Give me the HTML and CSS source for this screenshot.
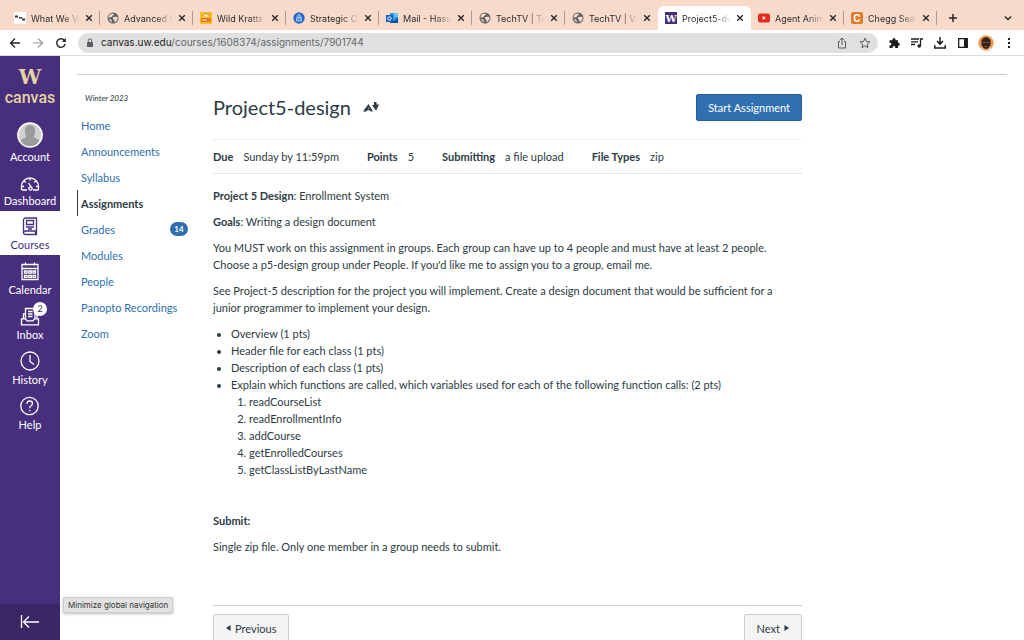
FILE: index.html
```html
<!DOCTYPE html>
<html lang="en">
<head>
<meta charset="utf-8">
<title>Project5-design</title>
<link rel="stylesheet" href="styles.css">
</head>
<body>
<svg class="defs" width="0" height="0" aria-hidden="true">
  <symbol id="globe" viewBox="0 0 12 12"><circle cx="6" cy="6" r="5.5" fill="#5f6368"/><path d="M2 3.2 4 1.700h3L6.400 3.200 5 4l-.5 1.300H2.800L1.400 6zM5.800 5.600l2-.8 2.700.3v1.800L9 9.600 7.600 10.300 7.400 8 6 7zM1.600 7l2.300.6L5 9l-.7 1.400z" fill="#f8dacb"/></symbol>
  <symbol id="close" viewBox="0 0 8 8"><path d="M1.200 1.200l5.600 5.600M6.800 1.200 1.200 6.800" stroke="#222" stroke-width="1.300" fill="none"/></symbol>
</svg>

<header class="browser">
  <nav class="tabs" aria-label="Browser tabs">
    <div class="tab"><svg class="favicon" viewBox="0 0 12 12"><path fill="#fff" d="M0 0h12v12H0z"/><path d="M1 3.500h3v2H1zM5 5h3v1.500H5zM8 6.500h3v2H8z" fill="#333"/></svg><span class="tab-name">What We Va</span><button class="close" aria-label="Close tab"><svg><use href="#close"/></svg></button></div>
    <div class="tab"><svg class="favicon"><use href="#globe"/></svg><span class="tab-name">Advanced C</span><button class="close" aria-label="Close tab"><svg><use href="#close"/></svg></button></div>
    <div class="tab"><svg class="favicon" viewBox="0 0 12 12"><path fill="#f4bd27" d="M0 0h12v12H0z"/><path fill="#e87a20" d="M1 6h10v4H1z"/><path d="M3 4l2-3 2 2 2-1v3M2 7h5v2H3" fill="#fff0c4" stroke="#c95b16" stroke-width=".6"/></svg><span class="tab-name">Wild Kratts S</span><button class="close" aria-label="Close tab"><svg><use href="#close"/></svg></button></div>
    <div class="tab"><svg class="favicon" viewBox="0 0 12 12"><circle cx="6" cy="6" r="5.700" fill="#2a66c8"/><path d="M3.500 5.500h5V9h-5zM4.500 5V4a1.500 1.500 0 013 0v1" fill="#5f9bea" stroke="#b9d5ff" stroke-width=".7"/></svg><span class="tab-name">Strategic Ca</span><button class="close" aria-label="Close tab"><svg><use href="#close"/></svg></button></div>
    <div class="tab"><svg class="favicon" viewBox="0 0 12 12"><path fill="#2a9be8" d="M4 1h8v10H4z"/><path fill="#66c4f4" d="M8 1h4v4H8z"/><path fill="#1550a0" d="M4 6l4 3 4-3v5H4z"/><path fill="#0f65bd" d="M0 3h7v7H0z"/><circle cx="3.500" cy="6.500" r="1.700" fill="none" stroke="#fff"/></svg><span class="tab-name">Mail - Hassa</span><button class="close" aria-label="Close tab"><svg><use href="#close"/></svg></button></div>
    <div class="tab"><svg class="favicon"><use href="#globe"/></svg><span class="tab-name">TechTV | Tec</span><button class="close" aria-label="Close tab"><svg><use href="#close"/></svg></button></div>
    <div class="tab before-active"><svg class="favicon"><use href="#globe"/></svg><span class="tab-name">TechTV | Vat</span><button class="close" aria-label="Close tab"><svg><use href="#close"/></svg></button></div>
    <div class="tab active"><span class="favicon uw-icon">W</span><span class="tab-name">Project5-de</span><button class="close" aria-label="Close tab"><svg><use href="#close"/></svg></button></div>
    <div class="tab"><svg class="favicon" viewBox="0 0 12 12"><rect y="1.500" width="12" height="9" rx="2" fill="#e8291e"/><path d="M4.700 4v4L8 6z" fill="#fff"/></svg><span class="tab-name">Agent Anima</span><button class="close" aria-label="Close tab"><svg><use href="#close"/></svg></button></div>
    <div class="tab"><span class="favicon chegg-icon">C</span><span class="tab-name">Chegg Sear</span><button class="close" aria-label="Close tab"><svg><use href="#close"/></svg></button></div>
    <button class="new-tab" aria-label="New tab"><svg width="10" height="10" viewBox="0 0 10 10"><path d="M5 1v8M1 5h8" stroke="#222" stroke-width="1.500"/></svg></button>
    <button class="tab-menu" aria-label="Search tabs"><svg width="8" height="8" viewBox="0 0 8 8"><path d="M1 2.500l3 3 3-3" fill="none" stroke="#222" stroke-width="1.300"/></svg></button>
  </nav>
  <div class="toolbar">
    <button aria-label="Back"><svg width="12" height="12" viewBox="0 0 12 12"><path d="M11 6H2M6 1.500 1.500 6 6 10.500" fill="none" stroke="#222" stroke-width="1.300"/></svg></button>
    <button aria-label="Forward"><svg width="12" height="12" viewBox="0 0 12 12"><path d="M1 6h9M6 1.500l4.500 4.500L6 10.500" fill="none" stroke="#999" stroke-width="1.200"/></svg></button>
    <button aria-label="Reload"><svg width="12" height="12" viewBox="0 0 12 12"><path d="M9.700 3.800A4.300 4.300 0 1010.200 7" fill="none" stroke="#222" stroke-width="1.400"/><path d="M10.800 1v4H6.800z" fill="#222"/></svg></button>
    <div class="address">
      <svg width="8" height="10" viewBox="0 0 8 10"><path d="M1.500 4.500h5V8.500h-5z" fill="#5a5d61" stroke="#5a5d61"/><path d="M2.300 4V2.500a1.700 1.700 0 013.400 0V4" fill="none" stroke="#5a5d61"/></svg>
      <span class="url"><b>canvas.uw.edu</b>/courses/1608374/assignments/7901744</span>
      <button aria-label="Share"><svg width="12" height="12" viewBox="0 0 12 12"><path d="M4 4.500H2.500V11h7V4.500H8M6 8V1M3.800 3 6 1l2.200 2" fill="none" stroke="#55585c"/></svg></button>
      <button aria-label="Bookmark"><svg width="12" height="12" viewBox="0 0 12 12"><path d="M6 1.200l1.400 3.200 3.500.4-2.600 2.300.7 3.500L6 8.800l-3 1.800.7-3.500L1.100 4.800l3.500-.4z" fill="none" stroke="#55585c"/></svg></button>
    </div>
    <div class="tools">
      <button aria-label="Extensions"><svg width="12" height="12" viewBox="0 0 12 12"><path d="M1.500 3.300h3v-.8a1.500 1.500 0 013 0v.8H10v2.500h.3a1.500 1.500 0 010 3H10V11H7.300v-.5a1.400 1.400 0 00-2.800 0v.5h-3V8.500H2a1.400 1.400 0 000-2.800h-.5z" fill="#1d1e20"/></svg></button>
      <button aria-label="Media"><svg width="12" height="12" viewBox="0 0 12 12"><path d="M0 2h8M0 4.800h7M0 7.500h4M9.500 9V2H12" fill="none" stroke="#1d1e20" stroke-width="1.300"/><circle cx="8.200" cy="9" r="1.800" fill="#1d1e20"/></svg></button>
      <button aria-label="Downloads"><svg width="12" height="12" viewBox="0 0 12 12"><path d="M6 0v7M3 4l3 3.200L9 4M.7 8v3h10.600V8" fill="none" stroke="#1d1e20" stroke-width="1.500"/></svg></button>
      <button aria-label="Side panel"><svg width="12" height="12" viewBox="0 0 12 12"><path d="M1.700 1.700h8.600v8.600H1.700z" fill="none" stroke="#1d1e20" stroke-width="1.300"/><path d="M7 1.500h3.500v9H7z" fill="#1d1e20"/></svg></button>
      <button aria-label="Profile"><svg width="16" height="16" viewBox="0 0 16 16"><circle cx="8" cy="8" r="7.700" fill="#e79b54"/><path d="M3.500 5Q8-1 12.500 5v5Q8 18 3.500 10z" fill="#35201c"/><path d="M5 7.500h2.500M8.700 7.500H11M6.500 11.500h3" stroke="#8e6251"/><path d="M2.500 13l2.500 2M13.500 13 11 15" stroke="#ddd" stroke-width="2"/></svg></button>
      <button aria-label="Menu"><svg width="12" height="12" viewBox="0 0 12 12"><path d="M5 1h2v2H5zM5 5h2v2H5zM5 9h2v2H5z" fill="#1d1e20"/></svg></button>
    </div>
  </div>
</header>

<div class="app">
  <nav class="global-nav" aria-label="Global navigation">
    <a class="logo" href="#"><span class="logo-w">W</span><span>canvas</span></a>
    <a class="nav-item account" href="#"><svg width="26" height="26" viewBox="0 0 26 26"><circle cx="13" cy="13" r="12" fill="#d0d0d0"/><path d="M3 20q1-3 6-4.500L8 10q-.5-7 5-7t5 7l-1 5.500q5 1.500 6 4.500-4 5-10 5T3 20z" fill="#9b9b9b"/><circle cx="13" cy="13" r="12" fill="none" stroke="#fff" stroke-width="1.700"/></svg>Account</a>
    <a class="nav-item dashboard" href="#"><svg width="20" height="16" viewBox="0 2 20 16"><path d="M7 16H2.500a1 1 0 01-1-1v-2.500a8.500 8.500 0 0117 0V15a1 1 0 01-1 1H13M10 4v2.500M4 7l1.800 1.500M16 7l-1.800 1.500M1.500 12.500H4M18.500 12.500H16M8.500 9l3 4.500" /><circle cx="10.500" cy="14.500" r="1.700"/></svg>Dashboard</a>
    <a class="nav-item current" href="#"><svg width="20" height="20" viewBox="0 0 20 20"><path d="M16.500 14.500V2H5.500a2 2 0 00-2 2v12.500a2 2 0 002 2h11V15H5.500a2 2 0 00-2 1.500M6.500 4.500h7v4h-7zM6 11h8M8 13h4M15.500 15v3.500"/></svg>Courses</a>
    <a class="nav-item" href="#"><svg width="20" height="20" viewBox="0 0 20 20"><path d="M2 3.500h16v15H2zM2 7.500h16M5.500 1.500v3M14.500 1.500v3M4.500 10h2.500v2.200H4.500zM8.800 10h2.500v2.200H8.800zM13 10h2.500v2.200H13zM4.500 14.300h2.500v2H4.500zM8.800 14.300h2.500v2H8.800zM13 14.300h2.500v2H13z"/></svg>Calendar</a>
    <a class="nav-item inbox" href="#"><svg width="20" height="20" viewBox="0 0 20 20"><path d="M5 8H3.500v5M15 8h2v5M5.500 13V2.500H15V13M8 5.500h4.500M8 8h4.500M8 10.500h4.500M1.500 12.800h4l1.500 2h6l1.500-2h4v6h-17z"/></svg><span class="badge">2</span>Inbox</a>
    <a class="nav-item" href="#"><svg width="20" height="20" viewBox="0 0 20 20"><circle cx="10" cy="10" r="9"/><path d="M10 4v6.500l4 3"/></svg>History</a>
    <a class="nav-item" href="#"><svg width="20" height="20" viewBox="0 0 20 20"><circle cx="9.500" cy="10" r="8.700"/><path d="M7 8q0-3 2.700-3 2.800 0 2.800 2.500 0 1.500-1.500 2.300-1.300.8-1.300 2.400M9.700 14v1.300"/></svg>Help</a>
    <button class="minimize" aria-label="Minimize global navigation"><svg width="20" height="14" viewBox="0 0 20 14"><path d="M1.500 0v13M19 7H4M9 1.500 3.500 7 9 12.500" fill="none" stroke="#fff" stroke-width="1.300"/></svg></button>
    <span class="tooltip" role="tooltip">Minimize global navigation</span>
  </nav>

  <div class="page">
    <nav class="course-nav" aria-label="Course navigation">
      <span class="term">Winter 2023</span>
      <a href="#">Home</a>
      <a href="#">Announcements</a>
      <a href="#">Syllabus</a>
      <a class="selected" href="#">Assignments</a>
      <a href="#">Grades<span class="count">14</span></a>
      <a href="#">Modules</a>
      <a href="#">People</a>
      <a href="#">Panopto Recordings</a>
      <a href="#">Zoom</a>
    </nav>
    <main class="assignment">
      <div class="heading">
        <h1>Project5-design</h1>
        <svg width="16" height="12" viewBox="0 0 16 12"><path d="M0 10.500 5.500 3l4 6.500v1H7.600L7 9.200H4.300l-1 1.300zM5 7.800h1.500L5.700 6.400z" fill="#2d3b45" fill-rule="evenodd"/><path d="M11 1h2.500v2.500H16L13.500 9h-1L9 4h2z" fill="#2d3b45"/></svg>
        <button class="start">Start Assignment</button>
      </div>
      <dl class="details">
        <div><dt>Due</dt><dd>Sunday by 11:59pm</dd></div>
        <div><dt>Points</dt><dd>5</dd></div>
        <div><dt>Submitting</dt><dd>a file upload</dd></div>
        <div><dt>File Types</dt><dd>zip</dd></div>
      </dl>
      <div class="description">
        <p><b>Project 5 Design</b>: Enrollment System</p>
        <p><b>Goals</b>: Writing a design document</p>
        <p>You MUST work on this assignment in groups. Each group can have up to 4 people and must have at least 2 people.<br>Choose a p5-design group under People. If you'd like me to assign you to a group, email me.</p>
        <p>See Project-5 description for the project you will implement. Create a design document that would be sufficient for a<br>junior programmer to implement your design.</p>
        <ul>
          <li>Overview (1 pts)</li>
          <li>Header file for each class (1 pts)</li>
          <li>Description of each class (1 pts)</li>
          <li>Explain which functions are called, which variables used for each of the following function calls: (2 pts)
            <ol><li>readCourseList</li><li>readEnrollmentInfo</li><li>addCourse</li><li>getEnrolledCourses</li><li>getClassListByLastName</li></ol>
          </li>
        </ul>
        <p class="submit"><b>Submit:</b></p>
        <p>Single zip file. Only one member in a group needs to submit.</p>
      </div>
      <div class="pager">
        <a href="#"><svg width="5" height="6" viewBox="0 0 5 6"><path d="M4.500 0v6L0 3z"/></svg>Previous</a>
        <a href="#">Next<svg width="5" height="6" viewBox="0 0 5 6"><path d="M.5 0v6L5 3z"/></svg></a>
      </div>
    </main>
  </div>
</div>
</body>
</html>
```
FILE: styles.css
```css
* { box-sizing: border-box; }
body {
  margin: 0;
  height: 100vh;
  display: flex;
  flex-direction: column;
  overflow: hidden;
  background: #fff;
  color: #2d3b45;
  font: 11px/17px Lato, "Liberation Sans", sans-serif;
}
a { text-decoration: none; color: #2e6fb0; }
button { border: 0; padding: 0; background: none; font: inherit; display: flex; align-items: center; justify-content: center; }
svg { flex: none; display: block; }
.defs { position: absolute; }

/* Browser chrome */
.browser { font-family: Inter, "Liberation Sans", sans-serif; flex: none; }
.tabs { display: flex; height: 30px; padding: 6px 12px 0 7px; background: #f8dacb; }
.tab { display: flex; align-items: center; flex: 0 1 93px; min-width: 0; padding: 0 7px 0 7px; gap: 5px; position: relative; color: #2b2b2b; font-size: 9px; }
.tab::after { content: ""; position: absolute; right: 0; top: 5px; height: 14px; width: 1px; background: #a89b95; }
.tab.before-active::after, .tab.active::after { display: none; }
.tab.active { background: #fff; border-radius: 6px 6px 0 0; }
.favicon { width: 12px; height: 12px; flex: none; }
.tab-name { flex: 1; min-width: 0; white-space: nowrap; -webkit-mask-image: linear-gradient(90deg, #000 65%, transparent); mask-image: linear-gradient(90deg, #000 65%, transparent); }
.close svg { width: 8px; height: 8px; }
.uw-icon { background: #46307c; color: #fff; font: bold 10px/14px "DejaVu Serif", serif; text-align: center; overflow: hidden; }
.chegg-icon { background: #e07b2c; color: #fff; border-radius: 2px; font: bold 10px/12px Inter, sans-serif; text-align: center; }
.new-tab { width: 32px; }
.tab-menu { margin-left: auto; }
.toolbar { display: flex; align-items: center; height: 26px; padding: 0 4px 0 9px; gap: 11px; border-bottom: 1px solid #dcdcdc; }
.address { flex: 1; display: flex; align-items: center; height: 20px; border-radius: 10px; background: #e0e0e0; padding: 0 7px 0 8px; gap: 11px; color: #66696d; font-size: 10px; }
.url { flex: 1; margin-left: -4px; white-space: nowrap; overflow: hidden; }
.url b { font-weight: 400; color: #222; }
.tools { display: flex; align-items: center; margin-left: -7px; }
.tools button { width: 23px; }

/* Global navigation */
.app { flex: 1; min-height: 0; display: flex; }
.global-nav { position: relative; flex: 0 0 60px; display: flex; flex-direction: column; background: #482f7d; }
.logo { display: flex; flex-direction: column; align-items: center; padding-top: 9px; height: 60px; color: #e6d3a2; font: 500 16px/18px Roboto, sans-serif; }
.logo-w { font: bold 20px/24px "DejaVu Serif", serif; }
.nav-item { display: flex; flex-direction: column; align-items: center; justify-content: flex-end; gap: 2px; height: 45px; padding-bottom: 4px; color: #fff; line-height: 13px; position: relative; }
.nav-item svg { fill: none; stroke: currentColor; stroke-width: 1.300; }
.account { height: 51px; }
.account svg { stroke: none; }
.dashboard, .current { height: 44px; }
.current { background: #fff; color: #46307c; }
.badge { position: absolute; left: 33px; top: 2px; width: 14px; height: 14px; border-radius: 7px; background: #fff; color: #2d3b45; font-size: 9px; line-height: 14px; text-align: center; }
.minimize { margin-top: auto; height: 36px; background: #3a2664; }
.tooltip { position: absolute; left: 63px; bottom: 27px; padding: 0 4px; border: 1px solid #cfcfcf; border-radius: 2px; background: #e2e2e2; color: #333; box-shadow: 0 1px 3px #0004; font: 8px/14px Inter, sans-serif; white-space: nowrap; }

/* Course page */
.page { flex: 1; min-width: 0; display: flex; align-items: flex-start; gap: 25px; margin: 18px 17px 0; border-top: 1px solid #c7cdd1; }
.course-nav { flex: 0 0 111px; display: flex; flex-direction: column; padding-top: 16px; }
.term { padding-left: 8px; margin-bottom: 6px; font-size: 8px; line-height: 15px; font-style: italic; }
.course-nav a { display: flex; justify-content: space-between; align-items: center; height: 26px; padding-left: 4px; white-space: nowrap; }
.course-nav .selected { border-left: 1px solid #2d3b45; padding-left: 3px; color: #2d3b45; font-weight: 700; }
.count { width: 18px; height: 14px; border-radius: 7px; background: #2e6fb0; color: #fff; font-size: 8px; line-height: 14px; text-align: center; font-weight: 700; }
.assignment { flex: 0 1 589px; min-width: 0; }
.heading { display: flex; align-items: center; height: 64px; gap: 12px; }
h1 { margin: 0; font-size: 20px; line-height: 24px; font-weight: 400; }
.start { margin-left: auto; height: 27px; padding: 0 11px; border: 1px solid #275f97; border-radius: 2px; background: #2f70b1; color: #fff; }
.details { display: flex; align-items: center; gap: 28px; margin: 0 0 13px; height: 35px; border-top: 1px solid #eee; border-bottom: 1px solid #e3e5e7; }
.details div { display: flex; gap: 10px; }
.details dt { font-weight: 700; }
.details dd { margin: 0; }
.description p { margin: 0 0 9px; }
.description ul, .description ol { margin: 0; padding-left: 18px; }
.description .submit { margin-top: 34px; }
.pager { display: flex; justify-content: space-between; margin-top: 50px; padding-top: 8px; border-top: 1px solid #c7cdd1; }
.pager a { display: flex; align-items: center; gap: 4px; height: 28px; padding: 0 12px; border: 1px solid #c7cdd1; border-radius: 2px; background: #f5f5f5; color: #2d3b45; }
.pager svg { fill: #2d3b45; }
```
